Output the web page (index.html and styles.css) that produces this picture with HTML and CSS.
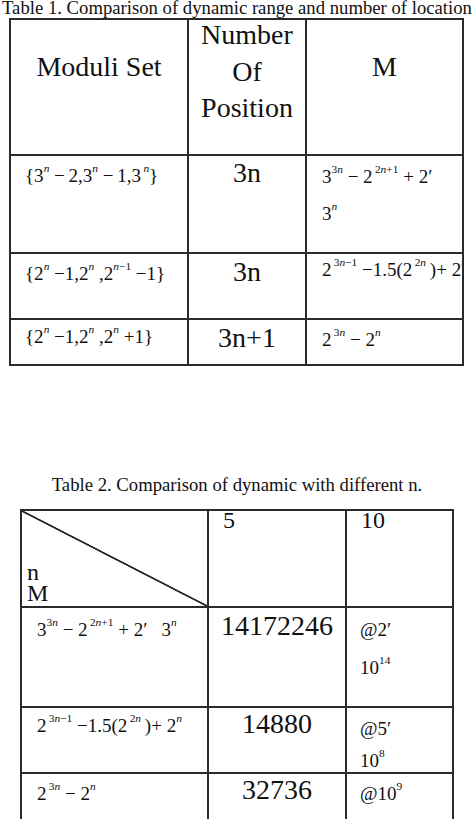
FILE: index.html
```html
<!DOCTYPE html>
<html>
<head>
<meta charset="utf-8">
<link rel="stylesheet" href="styles.css">
</head>
<body>
<div class="page">
  <p class="cap1">Table 1. Comparison of dynamic range and number of location</p>
  <div class="t1">
    <div class="cell h1 hc"><div class="lines">Moduli Set</div></div>
    <div class="cell h2 hc"><div class="lines">Number<br>Of<br>Position</div></div>
    <div class="cell h1 hc"><div class="lines">M</div></div>

    <div class="cell m1 r1a">{3<sup><i>n</i></sup> −&#8201;2,3<sup><i>n</i></sup> −&#8201;1,3<sup>&#8201;<i>n</i></sup>}</div>
    <div class="cell big r1b">3n</div>
    <div class="cell m3 r1c">3<sup>3<i>n</i></sup> − 2<sup>&#8201;2<i>n</i>+1</sup> + 2′<br>3<sup><i>n</i></sup></div>

    <div class="cell m1 r2a">{2<sup><i>n</i></sup> −1,2<sup><i>n</i></sup> ,2<sup><i>n</i>−1</sup> −1}</div>
    <div class="cell big r2b">3n</div>
    <div class="cell m3 r2c">2<sup>&#8201;3<i>n</i>−1</sup> −1.5(2<sup>&#8201;2<i>n</i></sup>&#8201;)+ 2<sup><i>n</i></sup></div>

    <div class="cell m1 r3a">{2<sup><i>n</i></sup> −1,2<sup><i>n</i></sup> ,2<sup><i>n</i></sup> +1}</div>
    <div class="cell big r3b">3n+1</div>
    <div class="cell m3 r3c">2<sup>&#8201;3<i>n</i></sup> − 2<sup><i>n</i></sup></div>
  </div>

  <p class="cap2">Table 2. Comparison of dynamic with different n.</p>
  <div class="t2">
    <div class="cell diag"><span>n</span><span>M</span></div>
    <div class="cell num"><div class="numtxt">5</div></div>
    <div class="cell num"><div class="numtxt">10</div></div>

    <div class="cell m1 s1a">3<sup>3<i>n</i></sup> − 2<sup>&#8201;2<i>n</i>+1</sup> + 2′&#8194; 3<sup><i>n</i></sup></div>
    <div class="cell big s1b">14172246</div>
    <div class="cell m3 s1c">@2′<br>10<sup>14</sup></div>

    <div class="cell m1 s2a">2<sup>&#8201;3<i>n</i>−1</sup> −1.5(2<sup>&#8201;2<i>n</i></sup>&#8201;)+ 2<sup><i>n</i></sup></div>
    <div class="cell big s2b">14880</div>
    <div class="cell m3 s2c">@5′<br>10<sup>8</sup></div>

    <div class="cell m1 s3a">2<sup>&#8201;3<i>n</i></sup> − 2<sup><i>n</i></sup></div>
    <div class="cell big s3b">32736</div>
    <div class="cell m3 s3c">@10<sup>9</sup></div>
  </div>
</div>
</body>
</html>
```

FILE: styles.css
```css
html, body {
  margin: 0;
  padding: 0;
  background: #fff;
}
body {
  width: 474px;
  height: 819px;
  overflow: hidden;
  font-family: "Liberation Serif", "Times New Roman", serif;
  color: #111;
}
.page {
  width: 474px;
}
.cap1 {
  margin: 0;
  height: 18px;
  line-height: 16px;
  font-size: 18.7px;
  padding-left: 2px;
  white-space: nowrap;
}
.cap2 {
  margin: 0;
  height: 20px;
  line-height: 20px;
  padding: 109px 0 14px;
  font-size: 18.7px;
  text-align: center;
  white-space: nowrap;
}
.t1, .t2 {
  display: grid;
  border-left: 2px solid #2a2a2a;
  border-top: 2px solid #2a2a2a;
}
.t1 {
  margin-left: 9px;
  width: 453px;
  grid-template-columns: 178px 118px 157px;
  grid-template-rows: 136px 98px 66px 46px;
}
.t2 {
  margin-left: 20px;
  width: 432px;
  grid-template-columns: 187px 138px 107px;
  grid-template-rows: 97px 100px 66px 60px;
}
.cell {
  box-sizing: border-box;
  border-right: 2px solid #2a2a2a;
  border-bottom: 2px solid #2a2a2a;
  overflow: hidden;
  white-space: nowrap;
}
sup {
  font-size: 0.6em;
  vertical-align: 0.85em;
  line-height: 0;
}
sup i { font-style: italic; }

/* Table 1 header */
.hc {
  font-size: 28px;
  text-align: center;
  line-height: 36px;
}
.h1 { padding-top: 29px; }
.h2 .lines { margin-top: -3px; line-height: 36.5px; }

.m1 {
  font-size: 19px;
  line-height: 30px;
  padding-left: 14px;
}
.m3 {
  font-size: 19px;
  line-height: 30px;
  padding-left: 15px;
}
.big {
  font-size: 28px;
  line-height: 32px;
  text-align: center;
}
.r1a { padding-top: 5px; }
.r1b { padding-top: 1px; }
.r1c { padding-top: 2px; line-height: 37px; }
.r2a { padding-top: 5px; }
.r2b { padding-top: 2px; }
.r2c { padding-top: 1px; }
.r3a { padding-top: 2px; }
.r3b { padding-top: 2px; }
.r3c { padding-top: 5px; }

/* Table 2 */
.diag {
  display: flex;
  flex-direction: column;
  justify-content: flex-end;
  padding: 0 0 2px 5px;
  font-size: 24px;
  line-height: 21px;
  background: linear-gradient(to top right,
    transparent calc(50% - 1.2px),
    #2a2a2a calc(50% - 0.6px),
    #2a2a2a calc(50% + 0.6px),
    transparent calc(50% + 1.2px));
}
.num {
  font-size: 24px;
  line-height: 26px;
  padding-left: 14px;
  overflow: visible;
}
.numtxt { margin-top: -4px; }
.t2 .m1 { padding-left: 15px; }
.t2 .m3 { padding-left: 13px; }
.s1a { padding-top: 7px; }
.s1b { padding-top: 2px; }
.s1c { padding-top: 3px; line-height: 38px; }
.s2a { padding-top: 3px; }
.s2b { padding-top: 0; }
.s2c { padding-top: 5px; line-height: 32px; }
.s3a { padding-top: 5px; }
.s3b { padding-top: 0; }
.s3c { padding-top: 5px; }
```
